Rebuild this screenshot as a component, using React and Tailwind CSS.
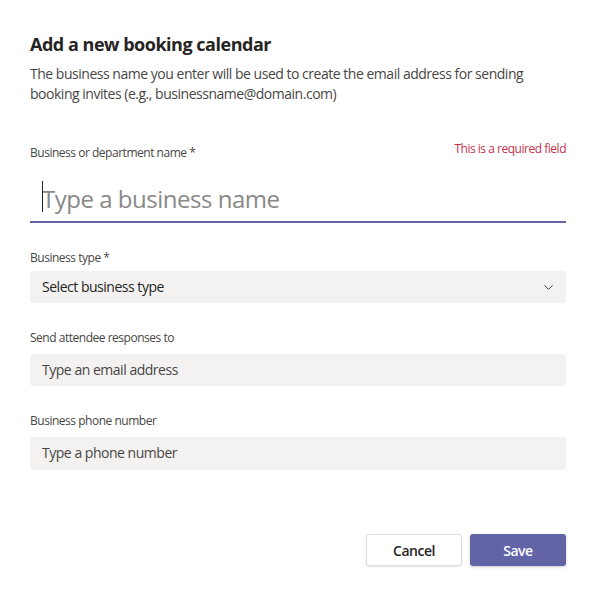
import { ChevronDown } from "lucide-react";

function Field({ label, children, className = "" }) {
  return (
    <div className={className}>
      <div className="text-[12px] leading-4 text-[#484644]">{label}</div>
      {children}
    </div>
  );
}

export default function App() {
  return (
    <div className="w-[597px] h-[599px] bg-white font-['Open_Sans',sans-serif] tracking-[-0.03em]">
      <div className="pl-[30px] pr-[31px] pt-[32px] flex flex-col">
        <h1 className="text-[18px] leading-6 font-bold text-[#252423]">
          Add a new booking calendar
        </h1>
        <p className="mt-2 text-[14px] leading-5 text-[#484644]">
          The business name you enter will be used to create the email address
          for sending booking invites (e.g., businessname@domain.com)
        </p>

        {/* business name */}
        <div className="mt-[37px]">
          <div className="flex justify-between items-start">
            <div className="mt-1 text-[12px] leading-4 text-[#484644]">
              Business or department name *
            </div>
            <div className="text-[12px] leading-4 text-[#c4314b]">
              This is a required field
            </div>
          </div>
          <div className="relative mt-[16px] h-[46px] border-b-2 border-[#6264a7] flex items-center px-3">
            <span className="absolute left-3 top-[4px] w-px h-[31px] bg-[#252423]" />
            <span className="text-[24px] leading-8 text-[#8a8886]">
              Type a business name
            </span>
          </div>
        </div>

        <Field label="Business type *" className="mt-[27px]">
          <div className="mt-[5px] h-8 bg-[#f3f2f1] rounded-[3px] flex items-center justify-between pl-3 pr-[10px]">
            <span className="text-[14px] text-[#252423] -mt-[2px]">Select business type</span>
            <ChevronDown size={15} strokeWidth={1.6} className="text-[#484644]" />
          </div>
        </Field>

        <Field label="Send attendee responses to" className="mt-[27px]">
          <div className="mt-[8px] h-8 bg-[#f3f2f1] rounded-[3px] flex items-center pl-3">
            <span className="text-[14px] text-[#484644] -mt-[2px]">Type an email address</span>
          </div>
        </Field>

        <Field label="Business phone number" className="mt-[27px]">
          <div className="mt-[8px] h-[33px] bg-[#f3f2f1] rounded-[3px] flex items-center pl-3">
            <span className="text-[14px] text-[#484644] -mt-[2px]">Type a phone number</span>
          </div>
        </Field>

        <div className="mt-[64px] flex justify-end gap-2">
          <button className="w-[96px] h-8 rounded-[3px] bg-white border border-[#e1dfdd] shadow-[0_1px_2px_rgba(0,0,0,0.1)] text-[14px] font-semibold text-[#252423]">
            Cancel
          </button>
          <button className="w-[96px] h-8 rounded-[3px] bg-[#6264a7] shadow-[0_1px_3px_rgba(0,0,0,0.2)] text-[14px] font-semibold text-white">
            Save
          </button>
        </div>
      </div>
    </div>
  );
}
